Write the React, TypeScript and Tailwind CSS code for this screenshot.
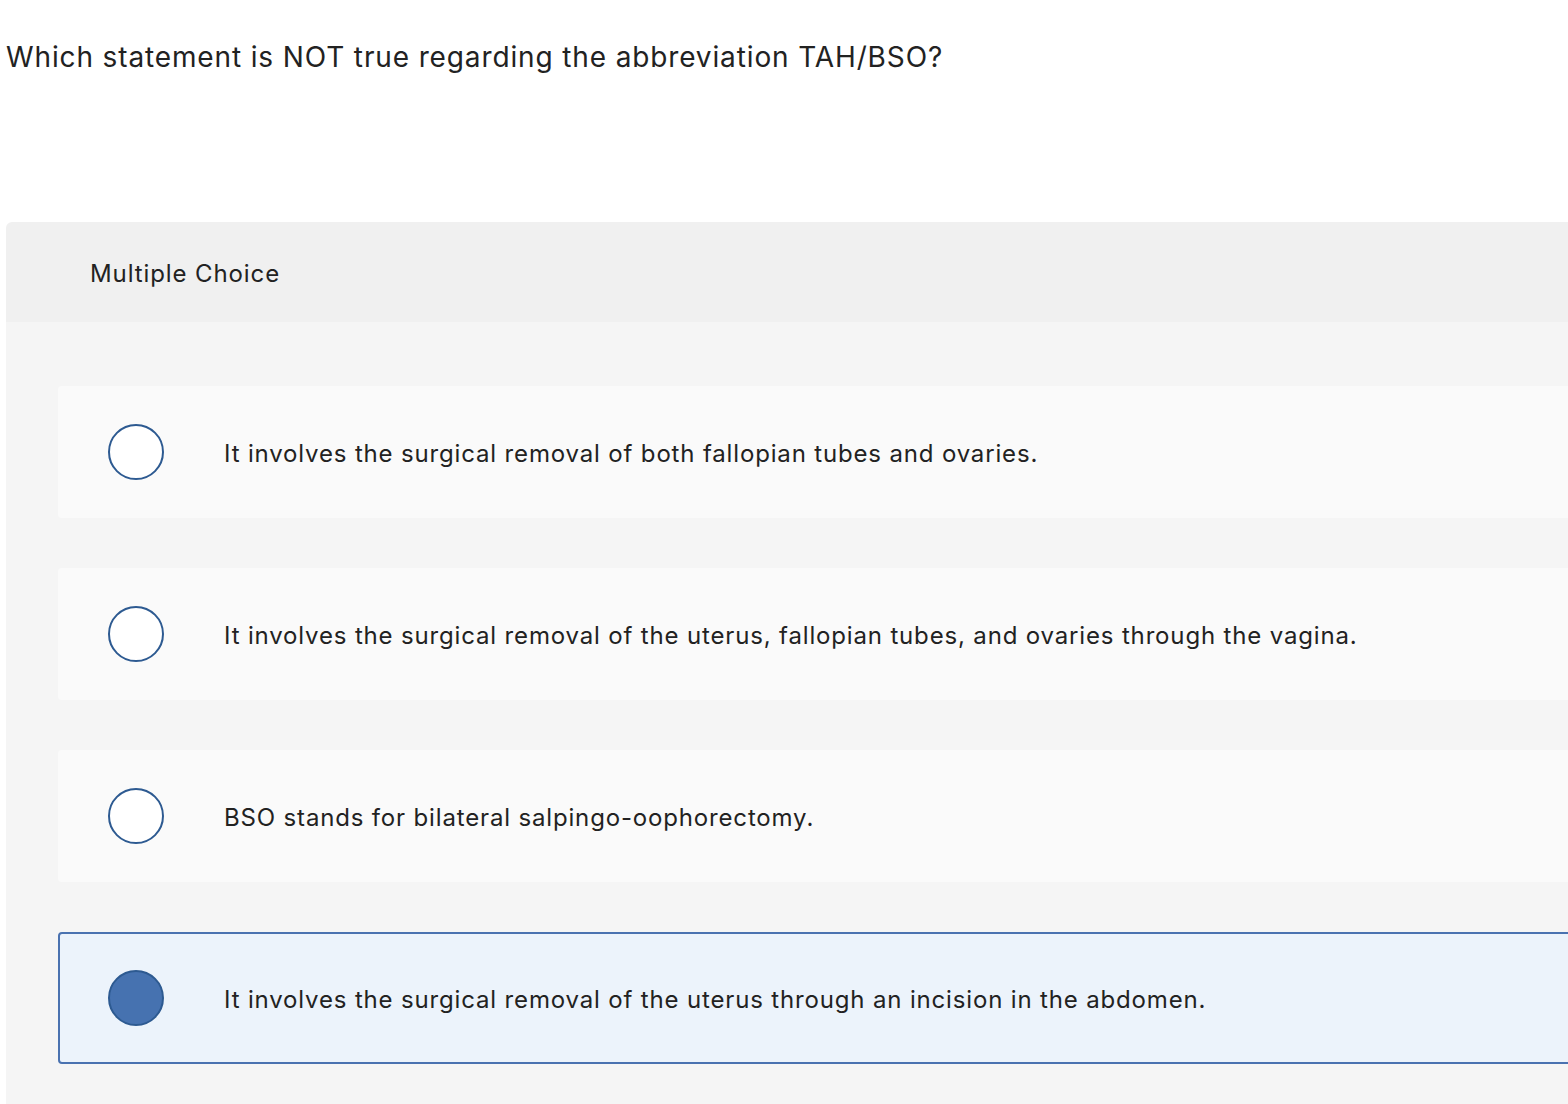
import React from "react";

const options = [
  { text: "It involves the surgical removal of both fallopian tubes and ovaries.", selected: false },
  {
    text: "It involves the surgical removal of the uterus, fallopian tubes, and ovaries through the vagina.",
    selected: false,
  },
  { text: "BSO stands for bilateral salpingo-oophorectomy.", selected: false },
  { text: "It involves the surgical removal of the uterus through an incision in the abdomen.", selected: true },
];

export default function App() {
  return (
    <div className="w-[1568px] h-[1104px] overflow-hidden bg-white text-[#222] font-['Inter','Lato',sans-serif]">
      <h1 className="pl-[6px] pt-[37px] text-[28px] leading-[40px] tracking-[0.87px]">
        Which statement is NOT true regarding the abbreviation TAH/BSO?
      </h1>

      <div className="ml-[6px] mt-[145px] w-[1700px] rounded-tl-[6px] overflow-hidden">
        <div className="h-[100px] bg-[#f0f0f0] pl-[84px] pt-[3px] flex items-center">
          <span className="text-[24px] tracking-[0.9px]">Multiple Choice</span>
        </div>
        <div className="bg-[#f5f5f5] pt-[64px] pl-[52px] pb-[60px] flex flex-col gap-[50px]">
          {options.map((o, i) => (
            <div
              key={i}
              className={`h-[132px] rounded-[4px] flex items-center ${
                o.selected ? "bg-[#ecf3fb] border-2 border-[#4a72b0]" : "bg-[#fafafa] border-2 border-transparent"
              }`}
            >
              <span
                className={`ml-[48px] w-[56px] h-[56px] rounded-full border-2 border-[#2d5a91] shrink-0 ${
                  o.selected ? "bg-[#4672b0]" : "bg-white"
                }`}
              />
              <span className="ml-[60px] pt-[3px] text-[24px] tracking-[0.84px]">{o.text}</span>
            </div>
          ))}
        </div>
      </div>
    </div>
  );
}
